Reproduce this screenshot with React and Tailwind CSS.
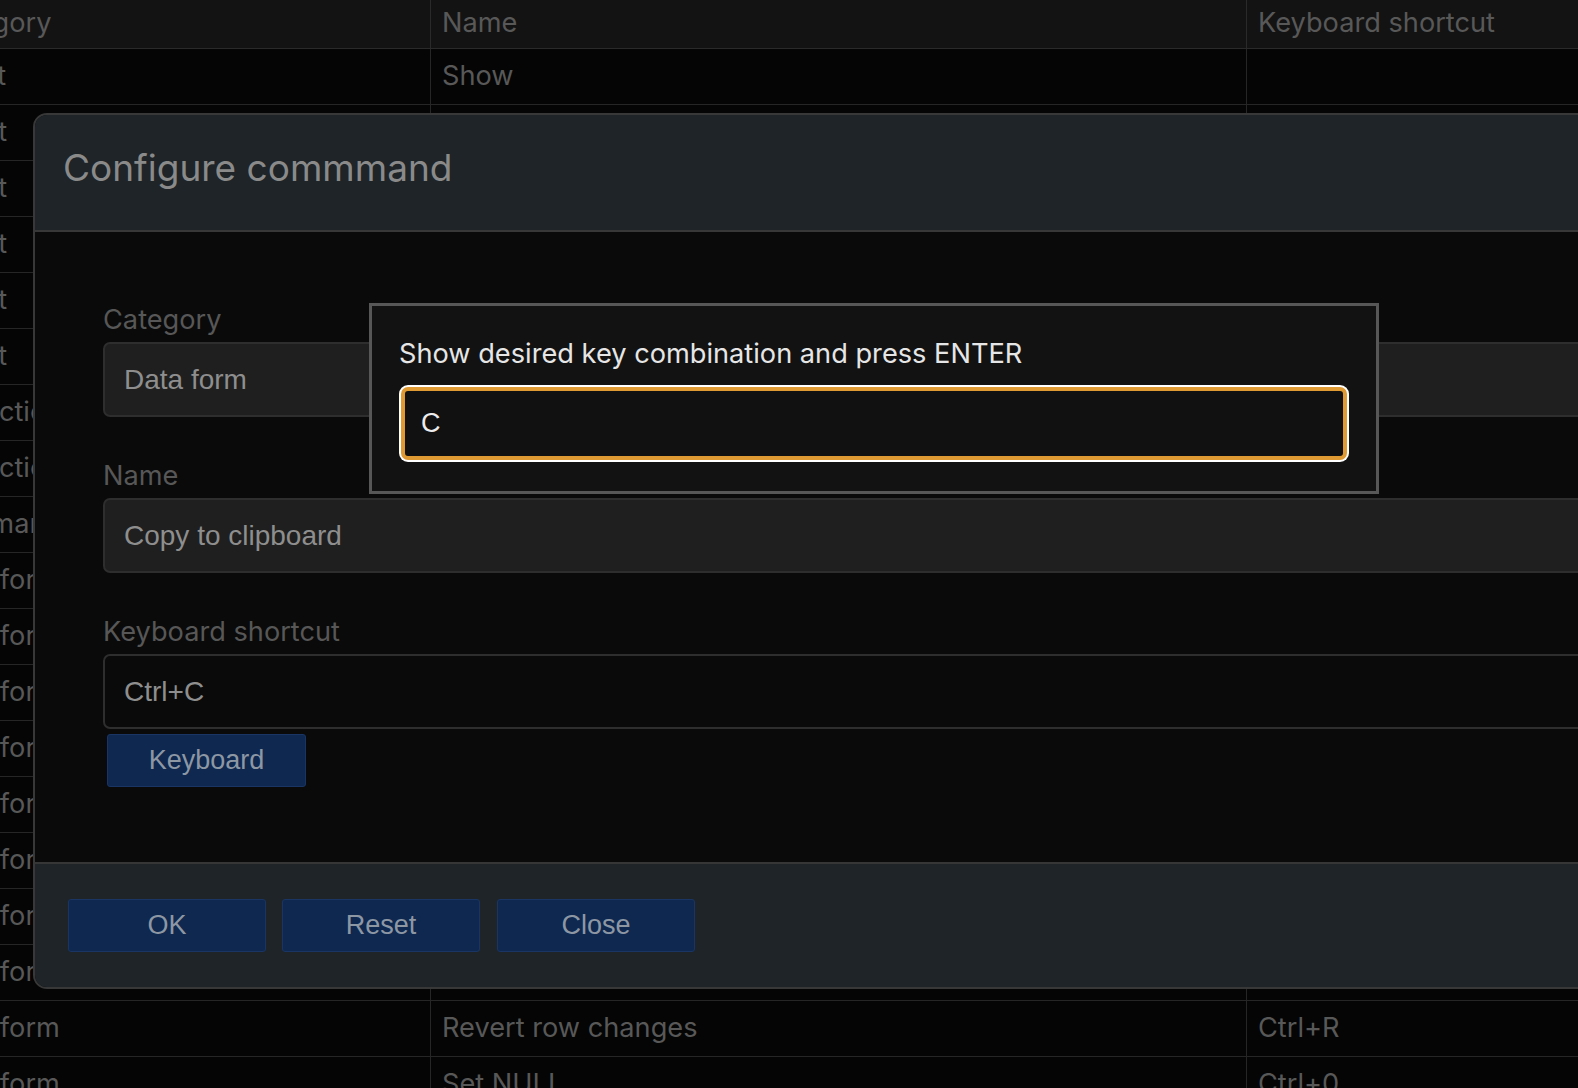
import React from "react";

const rows = [
  { cat: "Insert", name: "Show", key: "" },
  { cat: "Sheet", name: "", key: "" },
  { cat: "Sheet", name: "", key: "" },
  { cat: "Sheet", name: "", key: "" },
  { cat: "Sheet", name: "", key: "" },
  { cat: "Sheet", name: "", key: "" },
  { cat: "Projection", name: "", key: "" },
  { cat: "Projection", name: "", key: "" },
  { cat: "Summary", name: "", key: "" },
  { cat: "Data form", name: "", key: "" },
  { cat: "Data form", name: "", key: "" },
  { cat: "Data form", name: "", key: "" },
  { cat: "Data form", name: "", key: "" },
  { cat: "Data form", name: "", key: "" },
  { cat: "Data form", name: "", key: "" },
  { cat: "Data form", name: "", key: "" },
  { cat: "Data form", name: "", key: "" },
  { cat: "Data form", name: "Revert row changes", key: "Ctrl+R" },
  { cat: "Data form", name: "Set NULL", key: "Ctrl+0" },
];

const ui = { fontFamily: "Inter, 'Noto Sans', sans-serif" };
const sys = { fontFamily: "'Liberation Sans', Arial, sans-serif" };

function Table() {
  return (
    <div className="-ml-[79px] w-[1720px] text-[27.2px] text-[#585858]" style={ui}>
      <div className="flex h-[49px] bg-[#131313] border-b border-[#2a2a2a]">
        <div className="w-[510px] shrink-0 pl-[12px] pb-[2px] flex items-center border-r border-[#2a2a2a]">Category</div>
        <div className="w-[816px] shrink-0 pl-[11px] pb-[2px] flex items-center border-r border-[#2a2a2a]">Name</div>
        <div className="flex-1 pl-[11px] pb-[2px] flex items-center">Keyboard shortcut</div>
      </div>
      {rows.map((r, i) => (
        <div key={i} className="flex h-[56px] bg-[#050505] border-b border-[#262626]">
          <div className="w-[510px] shrink-0 pl-[12px] flex items-center border-r border-[#262626] whitespace-nowrap">{r.cat}</div>
          <div className="w-[816px] shrink-0 pl-[11px] flex items-center border-r border-[#262626] whitespace-nowrap">{r.name}</div>
          <div className="flex-1 pl-[11px] flex items-center whitespace-nowrap">{r.key}</div>
        </div>
      ))}
    </div>
  );
}

function Field({ label, value, filled, mt }) {
  return (
    <div className={mt}>
      <div className="h-[32px] leading-[32px] text-[27.2px] text-[#575757]" style={ui}>{label}</div>
      <div
        className={`mt-[6px] h-[75px] rounded-[7px] border-2 border-[#2e2e2e] flex items-center pl-[19px] text-[28px] text-[#8e8e8e] ${filled ? "bg-[#1f1f1f]" : "bg-[#0a0a0a]"}`}
        style={sys}
      >
        {value}
      </div>
    </div>
  );
}

function Btn({ children, className = "" }) {
  return (
    <button
      className={`w-[198px] h-[53px] rounded-[3px] bg-[#0e2850] border border-[#1a3563] text-[27px] text-[#8d97a4] flex items-center justify-center ${className}`}
      style={sys}
    >
      {children}
    </button>
  );
}

function Dialog() {
  return (
    <div className="absolute left-[33px] top-[113px] w-[1620px] h-[876px] rounded-[14px] border-2 border-[#383838] overflow-hidden flex flex-col bg-[#0a0a0a]">
      <div className="h-[117px] shrink-0 bg-[#1e2427] border-b-2 border-[#383838] flex items-center pl-[28px] pb-[9px]">
        <span className="text-[37px] text-[#8a8a8a]" style={ui}>Configure commmand</span>
      </div>
      <div className="flex-1 pt-[72px] pl-[68px]">
        <Field label="Category" value="Data form" filled />
        <Field label="Name" value="Copy to clipboard" filled mt="mt-[43px]" />
        <Field label="Keyboard shortcut" value="Ctrl+C" mt="mt-[43px]" />
        <Btn className="mt-[5px] ml-[4px] w-[199px]">Keyboard</Btn>
      </div>
      <div className="h-[125px] shrink-0 bg-[#1e2427] border-t-2 border-[#363636] flex items-start pt-[35px] pl-[33px] gap-[16px]">
        <Btn>OK</Btn>
        <Btn>Reset</Btn>
        <Btn className="ml-[1px]">Close</Btn>
      </div>
    </div>
  );
}

function KeyPopup() {
  return (
    <div className="absolute left-[369px] top-[303px] w-[1010px] h-[191px] bg-[#121212] border-[3px] border-[#575757] pt-[27px] pl-[27px] pr-[27px]">
      <div className="h-[42px] leading-[42px] text-[27.2px] text-[#e6e6e6]" style={ui}>
        Show desired key combination and press ENTER
      </div>
      <div className="mt-[10px] h-[77px] rounded-[9px] bg-white p-[2px]">
        <div className="h-full rounded-[7px] border-[4px] border-[#df9a33] bg-[#111111] flex items-center pl-[16px] text-[27px] text-[#ececec]" style={sys}>
          C
        </div>
      </div>
    </div>
  );
}

export default function App() {
  return (
    <div className="relative w-[1578px] h-[1088px] overflow-hidden bg-[#050505]">
      <Table />
      <Dialog />
      <KeyPopup />
    </div>
  );
}
